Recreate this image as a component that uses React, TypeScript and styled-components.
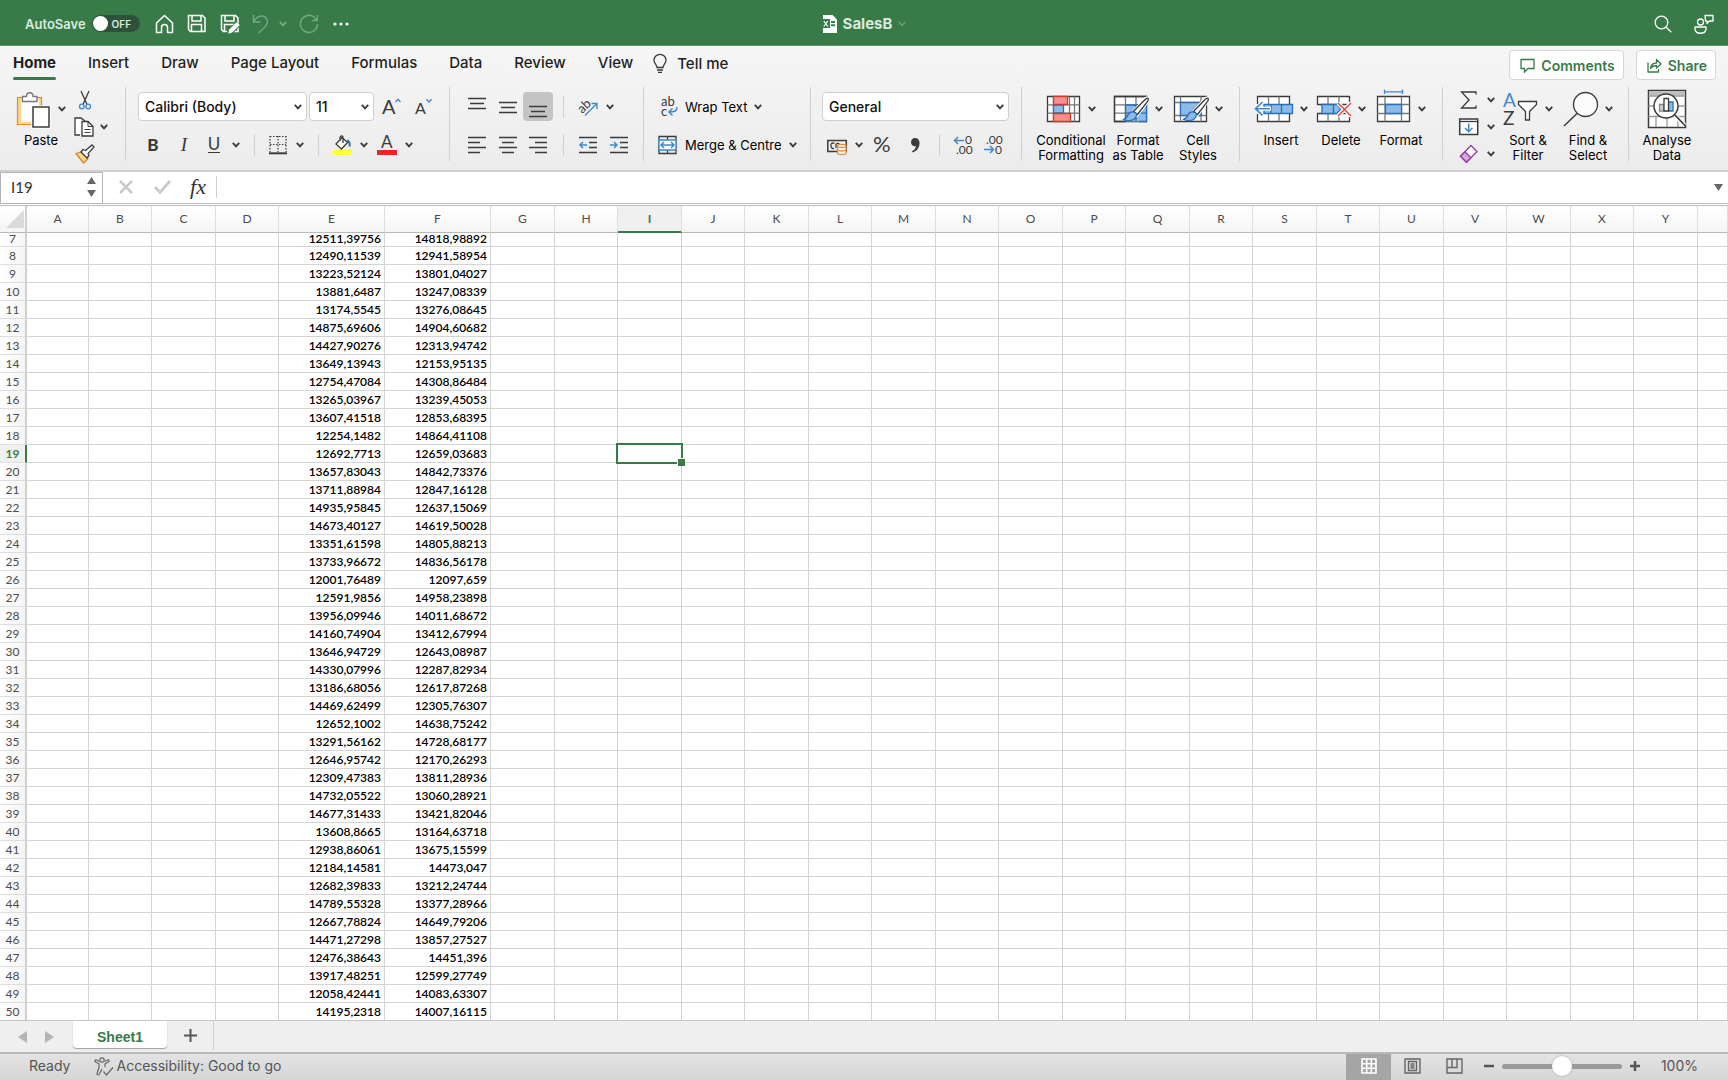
import React, { useState } from "react";
import styled, { createGlobalStyle, css } from "styled-components";

const INK = "#3b3b3b";
const BLUE = "#3d8ad0";
const GREEN = "#387b49";
const UI_FONT = 'Inter, "Liberation Sans", sans-serif';
const SHEET_FONT = 'Lato, "Liberation Sans", sans-serif';

const GlobalStyle = createGlobalStyle`
  * { box-sizing: border-box; }
  body { margin: 0; font-family: ${UI_FONT}; color: #1f1f1f; overflow: hidden; }
  button { font: inherit; color: inherit; background: none; border: 0; padding: 0; margin: 0; }
  svg { display: block; flex: none; overflow: visible; }
`;

/* ---------- data ---------- */

const rows: [number, string, string][] = [
  [7, "12511,39756", "14818,98892"],
  [8, "12490,11539", "12941,58954"],
  [9, "13223,52124", "13801,04027"],
  [10, "13881,6487", "13247,08339"],
  [11, "13174,5545", "13276,08645"],
  [12, "14875,69606", "14904,60682"],
  [13, "14427,90276", "12313,94742"],
  [14, "13649,13943", "12153,95135"],
  [15, "12754,47084", "14308,86484"],
  [16, "13265,03967", "13239,45053"],
  [17, "13607,41518", "12853,68395"],
  [18, "12254,1482", "14864,41108"],
  [19, "12692,7713", "12659,03683"],
  [20, "13657,83043", "14842,73376"],
  [21, "13711,88984", "12847,16128"],
  [22, "14935,95845", "12637,15069"],
  [23, "14673,40127", "14619,50028"],
  [24, "13351,61598", "14805,88213"],
  [25, "13733,96672", "14836,56178"],
  [26, "12001,76489", "12097,659"],
  [27, "12591,9856", "14958,23898"],
  [28, "13956,09946", "14011,68672"],
  [29, "14160,74904", "13412,67994"],
  [30, "13646,94729", "12643,08987"],
  [31, "14330,07996", "12287,82934"],
  [32, "13186,68056", "12617,87268"],
  [33, "14469,62499", "12305,76307"],
  [34, "12652,1002", "14638,75242"],
  [35, "13291,56162", "14728,68177"],
  [36, "12646,95742", "12170,26293"],
  [37, "12309,47383", "13811,28936"],
  [38, "14732,05522", "13060,28921"],
  [39, "14677,31433", "13421,82046"],
  [40, "13608,8665", "13164,63718"],
  [41, "12938,86061", "13675,15599"],
  [42, "12184,14581", "14473,047"],
  [43, "12682,39833", "13212,24744"],
  [44, "14789,55328", "13377,28966"],
  [45, "12667,78824", "14649,79206"],
  [46, "14471,27298", "13857,27527"],
  [47, "12476,38643", "14451,396"],
  [48, "13917,48251", "12599,27749"],
  [49, "12058,42441", "14083,63307"],
  [50, "14195,2318", "14007,16115"],
];

const letters = "ABCDEFGHIJKLMNOPQRSTUVWXY".split("");
const widthOf = (i: number) => {
  if (i === 0) return 62;
  if (i === 4 || i === 5) return 106;
  return i % 2 ? 63 : 64;
};

/* ---------- shared parts ---------- */

const Svg = ({ w, h, children }: { w: number; h: number; children: React.ReactNode }) => (
  <svg width={w} height={h} viewBox={`0 0 ${w} ${h}`} fill="none" stroke={INK} strokeWidth="1.3" aria-hidden="true">
    {children}
  </svg>
);

const Chevron = ({ color = INK, thin }: { color?: string; thin?: boolean }) => (
  <svg width="8" height="6" viewBox="0 0 8 6" fill="none" stroke={color} strokeWidth={thin ? 1.2 : 1.9} aria-hidden="true">
    <path d="M0.8 0.9 4 4.4 7.2 0.9" />
  </svg>
);

/* ---------- page frame ---------- */

const Window = styled.div`
  display: flex;
  flex-direction: column;
  height: 100vh;
  background: #fff;
`;

const TitleBar = styled.header`
  display: grid;
  grid-template-columns: 1fr auto 1fr;
  align-items: center;
  height: 46px;
  flex: none;
  padding: 2px 14px 0;
  background: ${GREEN};
  border-bottom: 1px solid #5d9469;
  color: #dbe9de;
`;

const QuickAccess = styled.div`
  display: flex;
  align-items: center;
  padding-left: 11px;
`;

const AutoSave = styled.button`
  display: flex;
  align-items: center;
  gap: 6px;
  margin-right: 13px;
  font-size: 13px;
  font-weight: 600;
`;

const Toggle = styled.span`
  display: flex;
  align-items: center;
  gap: 4px;
  width: 48px;
  height: 17px;
  padding: 1px;
  border-radius: 9px;
  background: #2e5239;
  font-size: 10px;
  &::before {
    content: "";
    width: 15px;
    height: 15px;
    border-radius: 50%;
    background: #fff;
  }
`;

const QuickButton = styled.button<{ $w?: number }>`
  display: flex;
  align-items: center;
  justify-content: center;
  width: ${(p) => p.$w ?? 33}px;
  height: 28px;
`;

const DocName = styled.button`
  display: flex;
  align-items: center;
  gap: 6px;
  font-size: 15px;
  font-weight: 700;
`;

const TitleActions = styled.div`
  display: flex;
  justify-content: flex-end;
  gap: 21px;
`;

/* ---------- ribbon ---------- */

const Ribbon = styled.section`
  flex: none;
  background: linear-gradient(#f6f6f6, #ececec);
  border-bottom: 2px solid #d0d0d0;
`;

const TabRow = styled.div`
  display: flex;
  justify-content: space-between;
  height: 38px;
  padding: 0 12px 0 13px;
`;

const Tabs = styled.nav`
  display: flex;
  align-items: flex-start;
  gap: 32px;
`;

const Tab = styled.button<{ $active?: boolean }>`
  height: 34px;
  padding-top: 3px;
  font-size: 15px;
  line-height: 28px;
  font-weight: ${(p) => (p.$active ? 700 : 500)};
  display: flex;
  flex-direction: column;
  ${(p) =>
    p.$active &&
    css`
      &::after {
        content: "";
        width: 100%;
        height: 3px;
        border-radius: 2px;
        background: ${GREEN};
      }
    `}
`;

const TellMe = styled.button`
  display: flex;
  align-items: center;
  gap: 10px;
  height: 34px;
  margin-left: -12px;
  font-size: 15px;
  font-weight: 500;
`;

const TabActions = styled.div`
  display: flex;
  gap: 12px;
  padding-top: 4px;
`;

const OutlineButton = styled.button`
  display: flex;
  align-items: center;
  gap: 6px;
  height: 30px;
  padding: 0 8px 0 10px;
  border: 1px solid #d6d6d6;
  border-radius: 4px;
  background: #fff;
  color: ${GREEN};
  font-size: 14px;
  font-weight: 600;
`;

const Groups = styled.div`
  display: flex;
  height: 86px;
`;

const Group = styled.div<{ $w?: number; $pad?: number; $last?: boolean }>`
  display: flex;
  flex: ${(p) => (p.$last ? "1" : "none")};
  width: ${(p) => (p.$w ? `${p.$w}px` : "auto")};
  padding-left: ${(p) => p.$pad ?? 12}px;
  background: ${(p) => (p.$last ? "none" : "linear-gradient(#d0d0d0, #d0d0d0) right 3px / 1px 74px no-repeat")};
`;

const Rows = styled.div`
  display: flex;
  flex-direction: column;
  gap: 8px;
  padding-top: 8px;
`;

const Line = styled.div`
  display: flex;
  align-items: flex-start;
  height: 30px;
`;

const Tool = styled.button<{ $w?: number; $on?: boolean }>`
  display: flex;
  align-items: center;
  justify-content: center;
  width: ${(p) => p.$w ?? 30}px;
  height: 29px;
  border-radius: 4px;
  background: ${(p) => (p.$on ? "#c4c4c4" : "none")};
`;

const Letter = styled.span<{ $kind?: "bold" | "italic" | "under" }>`
  font-family: ${SHEET_FONT};
  font-size: 17px;
  color: ${INK};
  ${(p) => p.$kind === "bold" && "font-weight: 900;"}
  ${(p) => p.$kind === "italic" && 'font: italic 19px "Liberation Serif", serif;'}
  ${(p) => p.$kind === "under" && "border-bottom: 1px solid #3b3b3b; line-height: 16px;"}
`;

const Rule = styled.span<{ $w?: number }>`
  align-self: center;
  width: ${(p) => p.$w ?? 20}px;
  height: 22px;
  background: linear-gradient(#d0d0d0, #d0d0d0) center / 1px 100% no-repeat;
`;

const SelectBox = styled.label<{ $w: number }>`
  display: grid;
  align-items: center;
  width: ${(p) => p.$w}px;
  margin-right: 2px;
  > * { grid-area: 1 / 1; }
  > svg { justify-self: end; margin-right: 5px; pointer-events: none; }
`;

const Select = styled.select`
  appearance: none;
  width: 100%;
  height: 29px;
  padding: 0 16px 0 6px;
  border: 1px solid #cfcfcf;
  border-radius: 4px;
  background: #fff;
  color: #111;
  font: 500 14px ${UI_FONT};
`;

const TextTool = styled.button`
  display: flex;
  align-items: center;
  gap: 7px;
  height: 30px;
  font-size: 13px;
  white-space: nowrap;
  color: #000;
`;

const BigTool = styled.button<{ $w?: number }>`
  display: flex;
  flex-direction: column;
  align-items: center;
  width: ${(p) => p.$w ?? 60}px;
  font-size: 13px;
  line-height: 15px;
  text-align: center;
  white-space: pre-line;
  color: #000;
`;

const BigIcon = styled.span`
  display: flex;
  align-items: center;
  gap: 6px;
  height: 49px;
`;

const SideTools = styled.div`
  display: flex;
  flex-direction: column;
  gap: 2px;
  padding-top: 3px;
`;

const SideTool = styled.button`
  display: grid;
  grid-template-columns: 22px 8px;
  gap: 7px;
  align-items: center;
  height: 25px;
`;

/* ---------- formula bar ---------- */

const FormulaBar = styled.div`
  display: flex;
  align-items: stretch;
  flex: none;
  height: 34px;
  border-bottom: 1px solid #bdbdbd;
  background: #fff;
`;

const NameBox = styled.div`
  display: flex;
  align-items: center;
  width: 103px;
  height: 32px;
  padding: 0 6px 2px 10px;
  border: 1px solid #b4b4b4;
`;

const NameInput = styled.input`
  flex: 1;
  min-width: 0;
  padding: 0;
  border: 0;
  background: none;
  color: #333;
  font: 15px ${SHEET_FONT};
`;

const FormulaRow = styled.div`
  display: flex;
  align-items: center;
  flex: 1;
  height: 32px;
  padding: 0 4px 1px 5px;
  border-bottom: 1px solid #bdbdbd;
`;

const FormulaInput = styled.input`
  flex: 1;
  border: 0;
  background: none;
  font: 14px ${UI_FONT};
`;

const Fx = styled.span`
  font: italic 22px/20px "Liberation Serif", serif;
  color: #333;
`;

/* ---------- sheet ---------- */

const SheetArea = styled.main`
  flex: 1;
  min-height: 0;
  overflow: hidden;
  background: #fff;
`;

const Sheet = styled.table`
  width: 100%;
  table-layout: fixed;
  border-collapse: separate;
  border-spacing: 0;
  font-family: ${SHEET_FONT};
  font-size: 12px;
  line-height: 17px;
`;

const ColHead = styled.th<{ $on?: boolean }>`
  height: 27px;
  padding: 0 0 1px;
  border-right: 1px solid #dedede;
  border-bottom: ${(p) => (p.$on ? `2px solid ${GREEN}` : "1px solid #b9b9b9")};
  background: ${(p) => (p.$on ? "#f0f0f0" : "linear-gradient(#ffffff, #f5f5f5)")};
  color: ${(p) => (p.$on ? GREEN : "#4c4c4c")};
  font-weight: ${(p) => (p.$on ? 700 : 400)};
`;

const Corner = styled(ColHead)`
  padding-left: 6px;
  border-right: 2px solid #cfcfcf;
`;

const RowHead = styled.th<{ $on?: boolean }>`
  padding: 0;
  border-right: 2px solid ${(p) => (p.$on ? GREEN : "#cfcfcf")};
  border-bottom: 1px solid #dedede;
  background: ${(p) => (p.$on ? "#f0f0f0" : "linear-gradient(90deg, #ffffff, #f5f5f5)")};
  color: ${(p) => (p.$on ? GREEN : "#4c4c4c")};
  font-weight: ${(p) => (p.$on ? 700 : 400)};
`;

const Cell = styled.td<{ $selected?: boolean }>`
  padding: 0 3px 0 0;
  border-right: 1px solid #d4d4d4;
  border-bottom: 1px solid #d4d4d4;
  color: #000;
  font-weight: 600;
  text-align: right;
  ${(p) => p.$selected && "position: relative; z-index: 1;"}
`;

const SheetRow = styled.tr<{ $cut?: boolean }>`
  height: ${(p) => (p.$cut ? 14 : 18)}px;
  line-height: ${(p) => (p.$cut ? 11 : 17)}px;
  vertical-align: ${(p) => (p.$cut ? "top" : "middle")};
  > * { vertical-align: inherit; }
`;

const Selection = styled.span`
  position: absolute;
  inset: -2px;
  border: 2px solid ${GREEN};
  &::after {
    content: "";
    position: absolute;
    right: -4px;
    bottom: -4px;
    width: 7px;
    height: 7px;
    border: 1px solid #fff;
    border-width: 1px 0 0 1px;
    background: ${GREEN};
  }
`;

/* ---------- footer ---------- */

const SheetTabs = styled.div`
  display: flex;
  align-items: flex-start;
  flex: none;
  height: 32px;
  border-top: 1px solid #c8c8c8;
  background: #efefef;
`;

const TabArrows = styled.div`
  display: flex;
  gap: 18px;
  width: 73px;
  padding: 10px 0 0 18px;
`;

const SheetTab = styled.button`
  height: 27px;
  width: 94px;
  border-radius: 0 0 4px 4px;
  background: #fff;
  box-shadow: 0 1px 1px #a0a0a0;
  color: ${GREEN};
  font: 700 14px "Liberation Sans", sans-serif;
  padding-top: 4px;
`;

const AddTab = styled.button`
  display: flex;
  align-items: center;
  justify-content: center;
  width: 47px;
  height: 29px;
  border-right: 1px solid #cfcfcf;
`;

const StatusBar = styled.footer`
  display: flex;
  align-items: center;
  flex: none;
  height: 28px;
  padding: 0 30px 0 29px;
  border-top: 2px solid #b8b8b8;
  background: linear-gradient(#e3e3e3, #d6d6d6);
  color: #555;
  font-size: 14px;
  line-height: 24px;
  > * { padding-bottom: 2px; }
`;

const Ready = styled.span``;

const Access = styled.button`
  display: flex;
  align-items: center;
  gap: 2px;
  margin-left: 24px;
`;

const Views = styled.div`
  display: flex;
  margin-left: auto;
  height: 100%;
  padding: 0;
`;

const ViewButton = styled.button<{ $on?: boolean }>`
  display: flex;
  align-items: center;
  justify-content: center;
  width: ${(p) => (p.$on ? 45 : 42)}px;
  padding-bottom: 2px;
  background: ${(p) => (p.$on ? "#a5a5a5" : "none")};
`;

const Zoom = styled.div`
  display: flex;
  align-items: center;
  gap: 8px;
  margin-left: 9px;
`;

const ZoomRange = styled.input`
  appearance: none;
  width: 120px;
  height: 20px;
  margin: 0;
  background: none;
  &::-webkit-slider-runnable-track {
    height: 5px;
    border-radius: 3px;
    background: #9a9a9a;
  }
  &::-webkit-slider-thumb {
    appearance: none;
    width: 20px;
    height: 20px;
    margin-top: -8px;
    border-radius: 50%;
    background: #fff;
    box-shadow: 0 0 2px #999;
  }
`;

const ZoomLabel = styled.span`
  width: 50px;
  text-align: right;
`;

/* ---------- icon drawings ---------- */

const Lines = ({ d }: { d: string }) => (
  <Svg w={18} h={20}>
    <path d={d} strokeWidth="1.5" />
  </Svg>
);

const Brush = () => (
  <>
    <path d="M34.5 9.5c1 .8.6 1.8-.2 3L24 26l-3.6-2.6L31.4 10.8c1.2-1.3 2.2-1.9 3.1-1.3z" fill="#fff" stroke="#fff" strokeWidth="3.5" />
    <path d="M34.9 9.3c.8.7.5 1.8-.3 3L24.5 25.5l-4-3L31.6 11c1.3-1.3 2.500-2.300 3.300-1.700z" fill="#fff" />
    <path d="M20.300 23c-2.700-.3-4.500 1-5.300 3-.8 2.200-2 3.600-4.500 4.300 3.500 2 8.500 1.700 11-.5 1.600-1.500 2.300-3.500 2-4.800-.4-1.200-1.700-1.900-3.200-2z" fill="#8dbbe8" stroke="#2a6fb8" />
  </>
);

const CondIcon = () => (
  <Svg w={36} h={40}>
    <path d="M1.500 7.500h32v25h-32z" fill="#fff" />
    <path d="M1.500 15.800h32M1.500 24.200h32M7.500 7.500v25M23.500 7.500v25M28.500 7.500v25" stroke="#777" />
    <path d="M7.500 16h10v8h-10z" fill="#8dbbe8" stroke="#2a6fb8" />
    <path d="M7.500 7.500h14v8h-14zM7.500 24.500h17v8h-17z" fill="#f2918f" stroke="#cf3b31" />
  </Svg>
);

const FormatTableIcon = () => (
  <Svg w={36} h={40}>
    <path d="M1.500 7.500h32v25h-32z" fill="#fff" />
    <path d="M12.500 16h21v16.500h-21z" fill="#8dbbe8" stroke="none" />
    <path d="M1.500 15.800h32M1.500 24.200h11M12.500 7.500v25M23 7.500v8" stroke="#777" />
    <path d="M12.500 32V16h21v16.500H26M12.500 24.200h21M23 16v16" stroke="#2a6fb8" />
    <path d="M12.500 32.500h-11v-25h32V16" />
    <Brush />
  </Svg>
);

const CellStylesIcon = () => (
  <Svg w={36} h={40}>
    <path d="M1.500 7.500h32v25h-32z" fill="#fff" />
    <path d="M1.500 13.500h32M1.500 26.500h32M7.500 7.500v25M28 7.500v25" stroke="#777" />
    <path d="M7.500 13.500H28v13H7.500z" fill="#8dbbe8" stroke="#2a6fb8" />
    <Brush />
  </Svg>
);

const InsertIcon = () => (
  <Svg w={40} h={40}>
    <path d="M3.500 15V7.500h32V15M3.500 25v7.500h32V25" fill="#fff" />
    <path d="M14.500 7.500V15M25 7.500V15M14.500 25v7.500M25 25v7.500" stroke="#777" />
    <path d="M10 15.500h28.500v9H10z" fill="#8dbbe8" stroke="#2a6fb8" />
    <path d="M17 15.500v9M27.500 15.500v9" stroke="#2a6fb8" />
    <path d="M2 19.700h15" stroke="#fff" strokeWidth="4" />
    <path d="M1.500 19.700H16M8.500 13l-7 6.700 7 6.700" stroke={BLUE} strokeWidth="1.600" />
  </Svg>
);

const DeleteIcon = () => (
  <Svg w={36} h={40}>
    <path d="M1.500 15.500v-8h32v8zM1.500 24.500v8h32v-8z" fill="#fff" />
    <path d="M12 7.500v8M23 7.500v8M12 24.500v8M23 24.500v8" stroke="#777" />
    <path d="M6 15.500h15l4 4.500-4 4.500H6z" fill="#8dbbe8" stroke="#2a6fb8" />
    <path d="M17.500 15.500v9" stroke="#2a6fb8" />
    <path d="M22 14l13 13M35 14L22 27" stroke="#fff" strokeWidth="4" />
    <path d="M22 14l13 13M35 14L22 27" stroke="#e0483e" strokeWidth="1.500" />
  </Svg>
);

const FormatIcon = () => (
  <Svg w={36} h={40}>
    <path d="M1.500 7.500h32v25h-32z" fill="#fff" />
    <path d="M1.500 15.500h32M1.500 24.500h32M9 7.500v25M25.500 7.500v25" stroke="#777" />
    <path d="M9.500 15.500h16v9h-16z" fill="#8dbbe8" stroke="#2a6fb8" />
    <path d="M8.500 2.800h18M8.500.5v4.600M26.500.5v4.600" stroke={BLUE} />
  </Svg>
);

const PasteIcon = () => (
  <Svg w={36} h={40}>
    <path d="M1.500 8.500h24v27h-24z" fill="#f8d98c" stroke="#e08a3c" strokeWidth="1.200" />
    <path d="M5 11h18v22H5z" fill="#fff" stroke="none" />
    <path d="M6.500 12.500v-5h4c0-5 6.500-5 6.500 0h4v5z" fill="#fff" stroke="#777" />
    <path d="M16.500 18h16.500v20h-16.500z" fill="#fff" stroke="#fff" strokeWidth="3" />
    <path d="M17 18h16v20H17z" fill="#fff" strokeWidth="1.500" />
  </Svg>
);

const SortIcon = () => (
  <Svg w={36} h={40}>
    <text x="0" y="18" fontSize="19" fontFamily="Lato" fill={BLUE} stroke="none">A</text>
    <text x="0" y="36" fontSize="19" fontFamily="Lato" fill={INK} stroke="none">Z</text>
    <path d="M15.500 12.500h18v3l-7 7v8.500h-4v-8.500l-7-7z" fill="#fff" />
  </Svg>
);

const FindIcon = () => (
  <Svg w={36} h={40}>
    <circle cx="22.500" cy="15.500" r="12" fill="#fcfcfc" />
    <path d="M14 24.500 1 37" strokeWidth="1.500" />
  </Svg>
);

const AnalyseIcon = () => (
  <Svg w={40} h={40}>
    <path d="M1.500 1.500h37v37h-37z" fill="#fff" strokeWidth="1.500" />
    <path d="M2.200 2.200h35.600v4.300H2.200z" fill="#bdbdbd" stroke="none" />
    <path d="M1.500 7h37M1.500 17h37M1.500 27.500h37M9 28v10M20 28v10M31 28v10" stroke="#999" />
    <circle cx="19" cy="17" r="12" fill="#fff" strokeWidth="1.500" />
    <path d="M12.500 15.500h4.500V22h-4.500z" fill="#ccc" stroke="#888" />
    <path d="M21.500 13h4.500v9h-4.500z" fill="#8dbbe8" stroke="#2a6fb8" />
    <path d="M17 9.500h4.500V22H17z" fill="#fff" />
    <path d="M28 26l10 10.500" stroke="#fff" strokeWidth="4" />
    <path d="M27.500 25.500l11 11.500" strokeWidth="1.800" />
  </Svg>
);

const SaveShape = () => <path d="M1.500 1.500h14l2.500 2.500v13.500H3.500l-2-2zM5 1.500v5.500h9V1.500M4.500 17.500v-7h10v7" />;

/* ---------- regions ---------- */

const Title = () => (
  <TitleBar>
    <QuickAccess>
      <AutoSave role="switch" aria-checked="false">
        AutoSave <Toggle>OFF</Toggle>
      </AutoSave>
      <QuickButton aria-label="Home" $w={24}>
        <svg width="19" height="20" viewBox="0 0 19 20" fill="none" stroke="#fff" strokeWidth="1.500">
          <path d="M1.500 9v9.500h5v-5c0-4 6-4 6 0v5h5V9l-8-7.500z" strokeLinejoin="round" />
        </svg>
      </QuickButton>
      <QuickButton aria-label="Save" $w={40}>
        <svg width="19" height="19" viewBox="0 0 19 19" fill="none" stroke="#fff" strokeWidth="1.500"><SaveShape /></svg>
      </QuickButton>
      <QuickButton aria-label="Save as" $w={26}>
        <svg width="20" height="20" viewBox="0 0 20 20" fill="none" stroke="#fff" strokeWidth="1.500">
          <SaveShape />
          <path d="M18.500 9.500 11 17l-2 3" stroke={GREEN} strokeWidth="6" />
          <path d="M16.800 8.500l2.500 2.500-7 7-3.500 1.200 1-3.700z" fill="#fff" stroke="#fff" strokeWidth="1" />
        </svg>
      </QuickButton>
      <QuickButton aria-label="Undo" $w={36}>
        <svg width="17" height="20" viewBox="0 0 17 20" fill="none" stroke="#76a682" strokeWidth="1.400">
          <path d="M1.500 1v7h7M1.500 8C5 1.500 11 .5 14 4c3 4 1 7-1.500 9.500L6.500 19" />
        </svg>
      </QuickButton>
      <QuickButton aria-label="Undo history" $w={9}><Chevron color="#76a682" /></QuickButton>
      <QuickButton aria-label="Redo" $w={42}>
        <svg width="20" height="20" viewBox="0 0 20 20" fill="none" stroke="#76a682" strokeWidth="1.400">
          <path d="M18.500 10A8.600 8.600 0 1 1 15.500 3.400l2.500 2.500M18.300 1v5.500h-5.500" />
        </svg>
      </QuickButton>
      <QuickButton aria-label="More" $w={22}>
        <svg width="16" height="4" viewBox="0 0 16 4" fill="#fff"><circle cx="2" cy="2" r="1.600" /><circle cx="8" cy="2" r="1.600" /><circle cx="14" cy="2" r="1.600" /></svg>
      </QuickButton>
    </QuickAccess>
    <DocName>
      <svg width="15" height="18" viewBox="0 0 15 18">
        <path d="M1 0h9.500L15 4.500V18H1z" fill="#fff" />
        <path d="M0 4h8v9H0z" fill={GREEN} />
        <path d="M9 6h4v2H9zM9 9.200h4v2H9z" fill={GREEN} />
        <path d="M1.800 6l4 5.500M5.800 6l-4 5.500" stroke="#fff" strokeWidth="1.200" />
      </svg>
      SalesB
      <Chevron color="#76a682" thin />
    </DocName>
    <TitleActions>
      <QuickButton aria-label="Search" $w={20}>
        <svg width="18" height="18" viewBox="0 0 18 18" fill="none" stroke="#fff" strokeWidth="1.300"><circle cx="7.500" cy="7.500" r="6.300" /><path d="M12 12l5.300 5.300" /></svg>
      </QuickButton>
      <QuickButton aria-label="Collaboration" $w={20}>
        <svg width="20" height="20" viewBox="0 0 20 20" fill="none" stroke="#fff" strokeWidth="1.300">
          <circle cx="6.500" cy="8" r="3" /><path d="M1 13h11v2.500c-1 5-10 5-11 0z" strokeLinejoin="round" /><path d="M11 1.500h8V7h-3.500L13 9.500V7h-1.500z" strokeLinejoin="round" />
        </svg>
      </QuickButton>
    </TitleActions>
  </TitleBar>
);

const tabNames = ["Home", "Insert", "Draw", "Page Layout", "Formulas", "Data", "Review", "View"];

const Big = ({ icon, label, w, plain }: { icon: React.ReactNode; label: string; w?: number; plain?: boolean }) => (
  <BigTool $w={w}>
    <BigIcon>{icon}{!plain && <Chevron />}</BigIcon>
    {label}
  </BigTool>
);

const RibbonBar = () => (
  <Ribbon>
    <TabRow>
      <Tabs aria-label="Ribbon">
        {tabNames.map((t) => <Tab key={t} $active={t === "Home"}>{t}</Tab>)}
        <TellMe>
          <Svg w={14} h={19}>
            <path d="M4 13.500C4 10.500 1 9.500 1 6.300a6 6 0 0 1 12 0c0 3.200-3 4.200-3 7.200zM4 16h6M5 18.300h4" />
          </Svg>
          Tell me
        </TellMe>
      </Tabs>
      <TabActions>
        <OutlineButton>
          <svg width="15" height="15" viewBox="0 0 15 15" fill="none" stroke={GREEN} strokeWidth="1.300"><path d="M1 1.500h13v9H8l-3.500 3.500v-3.500H1z" /></svg>
          Comments
        </OutlineButton>
        <OutlineButton>
          <svg width="15" height="15" viewBox="0 0 15 15" fill="none" stroke={GREEN} strokeWidth="1.300"><path d="M1 4.500V14h10.500v-3M3.500 10.500c.5-4 3-5.500 6-5.500V1.500L14 6l-4.500 4V7.500c-2.500 0-4.500.8-6 3z" strokeLinejoin="round" /></svg>
          Share
        </OutlineButton>
      </TabActions>
    </TabRow>
    <Groups>
      <Group $w={126} $pad={11}>
        <Big icon={<PasteIcon />} label="Paste" w={60} />
        <SideTools>
          <SideTool aria-label="Cut">
            <Svg w={22} h={20}>
              <path d="M10 1l6 13.500M18 1l-6 13.500" />
              <circle cx="10.800" cy="16.500" r="2.300" stroke={BLUE} /><circle cx="17.200" cy="16.500" r="2.300" stroke={BLUE} />
            </Svg>
          </SideTool>
          <SideTool aria-label="Copy">
            <Svg w={22} h={20}>
              <path d="M9 18H4V1h6l4 3" fill="#fff" />
              <path d="M11 4.500h6l5 5v9.500h-11z" fill="#fff" /><path d="M17 4.500v5h5M13.500 12.500h6M13.500 15.500h6" strokeWidth="1" />
            </Svg>
            <Chevron />
          </SideTool>
          <SideTool aria-label="Format painter">
            <Svg w={22} h={20}>
              <path d="M5 9.500l5-1.500 7 6.500-4.500 4.500z" fill="#f8d98c" stroke="#e07f2c" />
              <path d="M10 8l2-2.500 2.500 1L21 1l2 2-6 6.500 1 2-2 2.500z" fill="#fff" />
            </Svg>
          </SideTool>
        </SideTools>
      </Group>

      <Group $w={324}>
        <Rows>
          <Line>
            <SelectBox $w={169}><Select aria-label="Font"><option>Calibri (Body)</option></Select><Chevron /></SelectBox>
            <SelectBox $w={65}><Select aria-label="Font size"><option>11</option></Select><Chevron /></SelectBox>
            <Tool aria-label="Increase font size" $w={32}>
              <Svg w={20} h={20}><text x="0" y="17" fontSize="20" fontFamily="Lato" fill={INK} stroke="none">A</text><path d="M13.500 5l2.500-2.800L18.500 5" stroke={BLUE} /></Svg>
            </Tool>
            <Tool aria-label="Decrease font size" $w={32}>
              <Svg w={18} h={20}><text x="0" y="17" fontSize="16" fontFamily="Lato" fill={INK} stroke="none">A</text><path d="M11.500 2.200L14 5l2.500-2.800" stroke={BLUE} /></Svg>
            </Tool>
          </Line>
          <Line>
            <Tool aria-label="Bold"><Letter $kind="bold">B</Letter></Tool>
            <Tool aria-label="Italic" $w={32}><Letter $kind="italic">I</Letter></Tool>
            <Tool aria-label="Underline" $w={28}><Letter $kind="under">U</Letter></Tool>
            <Tool aria-label="Underline options" $w={16}><Chevron /></Tool>
            <Rule />
            <Tool aria-label="Borders" $w={28}>
              <Svg w={18} h={20}><path d="M1 1.500h16M1 9.500h16M1 1v16M9 1v16M17 1v16" strokeDasharray="1.500 1.500" strokeWidth="1.200" /><path d="M0 18.300h18" strokeWidth="2" /></Svg>
            </Tool>
            <Tool aria-label="Border options" $w={16}><Chevron /></Tool>
            <Rule />
            <Tool aria-label="Fill colour" $w={28}>
              <Svg w={20} h={20}>
                <path d="M10 2.500 4 9l5.500 5 6-6.500zM8 6V2.500c0-2 3-2 3 0V8" fill="#fff" /><path d="M15 5.500c2.500.5 3 2.500 2.500 6" stroke="#2a6fb8" strokeWidth="2" />
                <path d="M0 17.500h20" stroke="#ffff4d" strokeWidth="5" />
              </Svg>
            </Tool>
            <Tool aria-label="Fill options" $w={16}><Chevron /></Tool>
            <Tool aria-label="Font colour">
              <Svg w={20} h={20}><text x="4" y="13" fontSize="17" fontFamily="Lato" fill={INK} stroke="none">A</text><path d="M0 17.500h20" stroke="#e8291c" strokeWidth="5" /></Svg>
            </Tool>
            <Tool aria-label="Font colour options" $w={14}><Chevron /></Tool>
          </Line>
        </Rows>
      </Group>

      <Group $w={194} $pad={11}>
        <Rows>
          <Line>
            <Tool aria-label="Align top" $w={31}><Lines d="M0 1.500h18M2 6.500h14M0 11.500h18" /></Tool>
            <Tool aria-label="Align middle" $w={31}><Lines d="M0 5.500h18M2 10.500h14M0 15.500h18" /></Tool>
            <Tool aria-label="Align bottom" $w={30} $on><Lines d="M0 9.500h18M2 14.500h14M0 19.500h18" /></Tool>
            <Rule />
            <Tool aria-label="Orientation">
              <Svg w={20} h={20}>
                <text x="1" y="15" fontSize="13" fontFamily="Lato" fill={INK} stroke="none" transform="rotate(-45 5 12)">ab</text>
                <path d="M7 18.500 19 6.500M13.500 6.500H19V12" stroke={BLUE} />
              </Svg>
            </Tool>
            <Tool aria-label="Orientation options" $w={14}><Chevron /></Tool>
          </Line>
          <Line>
            <Tool aria-label="Align left" $w={31}><Lines d="M0 2.500h18M0 7.500h12M0 12.500h18M0 17.500h12" /></Tool>
            <Tool aria-label="Centre" $w={31}><Lines d="M0 2.500h18M3 7.500h12M0 12.500h18M3 17.500h12" /></Tool>
            <Tool aria-label="Align right" $w={30}><Lines d="M0 2.500h18M6 7.500h12M0 12.500h18M6 17.500h12" /></Tool>
            <Rule />
            <Tool aria-label="Decrease indent">
              <Svg w={18} h={20}><path d="M0 2.500h18M10 7.500h8M10 12.500h8M0 17.500h18" strokeWidth="1.500" /><path d="M8 10H1M4 7l-3 3 3 3" stroke={BLUE} strokeWidth="1.500" /></Svg>
            </Tool>
            <Tool aria-label="Increase indent" $w={32}>
              <Svg w={18} h={20}><path d="M0 2.500h18M10 7.500h8M10 12.500h8M0 17.500h18" strokeWidth="1.500" /><path d="M0 10h7M4 7l3 3-3 3" stroke={BLUE} strokeWidth="1.500" /></Svg>
            </Tool>
          </Line>
        </Rows>
      </Group>

      <Group $w={167} $pad={14}>
        <Rows>
          <Line>
            <TextTool>
              <Svg w={20} h={20}>
                <text x="3" y="9" fontSize="13" fontFamily="Lato" fill={INK} stroke="none">ab</text>
                <text x="3" y="19" fontSize="13" fontFamily="Lato" fill={INK} stroke="none">c</text>
                <path d="M19 10c0 4-2 5-8 5M14.500 11.500 11 15l3.500 3.500" stroke={BLUE} strokeWidth="1.500" />
              </Svg>
              Wrap Text <Chevron />
            </TextTool>
          </Line>
          <Line>
            <TextTool>
              <Svg w={20} h={20}>
                <path d="M1 1.500h17v17H1zM9.500 1v4M9.500 15v4" /><path d="M1 5h17v10H1z" fill="#fff" stroke={BLUE} /><path d="M3 10h13M6 7l-3 3 3 3M13 7l3 3-3 3" stroke={BLUE} strokeWidth="1.500" />
              </Svg>
              Merge &amp; Centre <Chevron />
            </TextTool>
          </Line>
        </Rows>
      </Group>

      <Group $w={211} $pad={11}>
        <Rows>
          <Line>
            <SelectBox $w={187}><Select aria-label="Number format"><option>General</option></Select><Chevron /></SelectBox>
          </Line>
          <Line>
            <Tool aria-label="Currency">
              <Svg w={20} h={20}>
                <path d="M.8 5.500h18.500v11H.8z" strokeWidth="1.500" /><path d="M7.500 8.300c-3-1-4 1-3.500 3s1 2.500 3 2.300M9 13V9.500c1-1.500 2.500-1.500 3.500 0" />
                <path d="M10.500 11c0-2.200 8.500-2.200 8.500 0v7c0 2-8.500 2-8.500 0z" fill="#fff" stroke="#e8893a" /><path d="M10.500 11c0 2 8.500 2 8.500 0M10.500 14.500c0 2 8.500 2 8.500 0" stroke="#e8893a" />
              </Svg>
            </Tool>
            <Tool aria-label="Currency options" $w={14}><Chevron /></Tool>
            <Tool aria-label="Percent" $w={34}>
              <Svg w={20} h={22}><text x="0" y="18" fontSize="22" fontFamily="Lato" fill={INK} stroke="none">%</text></Svg>
            </Tool>
            <Tool aria-label="Comma style">
              <Svg w={12} h={18}><path d="M6 2a4.200 4.200 0 0 0-1 8.200c.8.200 1.500 0 2-.2-.3 2.500-1.800 4.200-4 5.200l.6 1.300C8 15 10.800 11.500 10.500 6.300 10.200 3.500 8.500 2 6 2z" fill={INK} stroke="none" /></Svg>
            </Tool>
            <Rule $w={18} />
            <Tool aria-label="Increase decimals">
              <Svg w={20} h={20}>
                <text x="12" y="9" fontSize="12" fontFamily="Lato" fill={INK} stroke="none">0</text>
                <text x="3" y="19" fontSize="12" fontFamily="Lato" fill={INK} stroke="none">.00</text>
                <path d="M11 5.500H1.500M5 2 1.500 5.500 5 9" stroke={BLUE} strokeWidth="1.500" />
              </Svg>
            </Tool>
            <Tool aria-label="Decrease decimals">
              <Svg w={20} h={20}>
                <text x="3" y="9" fontSize="12" fontFamily="Lato" fill={INK} stroke="none">.00</text>
                <text x="12" y="19" fontSize="12" fontFamily="Lato" fill={INK} stroke="none">0</text>
                <path d="M1 14.500h9.500M7 11l3.500 3.500L7 18" stroke={BLUE} strokeWidth="1.500" />
              </Svg>
            </Tool>
          </Line>
        </Rows>
      </Group>

      <Group $w={218}>
        <Big icon={<CondIcon />} label={"Conditional\nFormatting"} w={74} />
        <Big icon={<FormatTableIcon />} label={"Format\nas Table"} />
        <Big icon={<CellStylesIcon />} label={"Cell\nStyles"} />
      </Group>

      <Group $w={203} $pad={11}>
        <Big icon={<InsertIcon />} label="Insert" />
        <Big icon={<DeleteIcon />} label="Delete" />
        <Big icon={<FormatIcon />} label="Format" />
      </Group>

      <Group $w={186} $pad={15}>
        <SideTools>
          <SideTool aria-label="AutoSum">
            <Svg w={22} h={20}><path d="M18 4.500V2H3.500l7.500 8-7.500 8H18v-2.500" /></Svg><Chevron />
          </SideTool>
          <SideTool aria-label="Fill">
            <Svg w={22} h={20}><path d="M1.700 2h18v15.500h-18z" fill="#fff" strokeWidth="1.500" /><path d="M1.700 4.500h18" /><path d="M10.700 6.500v8M7 11l3.700 3.700 3.700-3.700" stroke={BLUE} strokeWidth="1.500" /></Svg><Chevron />
          </SideTool>
          <SideTool aria-label="Clear">
            <Svg w={22} h={20}><path d="M13 1.500l6 6L8.500 18.300l-6-6z" fill="#fff" stroke="#8e3fa3" /><path d="M7 7.800l6 6-4.500 4.500-6-6z" fill="#d8a6df" stroke="#8e3fa3" /></Svg><Chevron />
          </SideTool>
        </SideTools>
        <Big icon={<SortIcon />} label={"Sort &\nFilter"} w={66} />
        <Big icon={<FindIcon />} label={"Find &\nSelect"} w={54} />
      </Group>

      <Group $last>
        <Big icon={<AnalyseIcon />} label={"Analyse\nData"} w={52} plain />
      </Group>
    </Groups>
  </Ribbon>
);

const Formula = () => (
  <FormulaBar>
    <NameBox>
      <NameInput aria-label="Name box" defaultValue="I19" />
      <svg width="9" height="20" viewBox="0 0 9 20" fill="#666"><path d="M4.500 0 9 7H0zM4.500 20 0 13h9z" /></svg>
    </NameBox>
    <FormulaRow>
      <Tool aria-label="Cancel" $w={36}><svg width="14" height="14" viewBox="0 0 14 14" stroke="#c9c9c9" strokeWidth="2.500"><path d="M1 1l12 12M13 1 1 13" /></svg></Tool>
      <Tool aria-label="Enter" $w={36}><svg width="17" height="14" viewBox="0 0 17 14" fill="none" stroke="#c9c9c9" strokeWidth="2.800"><path d="M1 7l5 5.500L16 1" /></svg></Tool>
      <Tool aria-label="Insert function" $w={36}><Fx>fx</Fx></Tool>
      <Rule $w={1} />
      <FormulaInput aria-label="Formula" />
      <QuickButton aria-label="Expand formula bar" $w={12}><svg width="9" height="7" viewBox="0 0 9 7" fill="#666"><path d="M4.500 7 0 0h9z" /></svg></QuickButton>
    </FormulaRow>
  </FormulaBar>
);

const Grid = () => (
  <SheetArea>
    <Sheet>
      <colgroup>
        <col width={27} />
        {letters.map((l, i) => <col key={l} width={widthOf(i)} />)}
        <col />
      </colgroup>
      <thead>
        <tr>
          <Corner aria-label="Select all"><svg width="18" height="18" viewBox="0 0 18 18"><path d="M18 0v18H0z" fill="#dadada" /></svg></Corner>
          {letters.map((l) => <ColHead key={l} $on={l === "I"}>{l}</ColHead>)}
          <ColHead />
        </tr>
      </thead>
      <tbody>
        {rows.map(([n, e, f], r) => (
          <SheetRow key={n} $cut={r === 0}>
            <RowHead $on={n === 19}>{n}</RowHead>
            {letters.map((l) => {
              const selected = l === "I" && n === 19;
              return (
                <Cell key={l} $selected={selected}>
                  {l === "E" ? e : l === "F" ? f : null}
                  {selected && <Selection />}
                </Cell>
              );
            })}
            <Cell />
          </SheetRow>
        ))}
      </tbody>
    </Sheet>
  </SheetArea>
);

const Footer = () => {
  const [zoom, setZoom] = useState(100);
  return (
    <>
      <SheetTabs>
        <TabArrows>
          <button aria-label="Previous sheet"><svg width="9" height="12" viewBox="0 0 9 12" fill="#b5b5b5"><path d="M0 6l9-6v12z" /></svg></button>
          <button aria-label="Next sheet"><svg width="9" height="12" viewBox="0 0 9 12" fill="#b5b5b5"><path d="M9 6 0 0v12z" /></svg></button>
        </TabArrows>
        <SheetTab>Sheet1</SheetTab>
        <AddTab aria-label="Add sheet"><svg width="13" height="13" viewBox="0 0 13 13" stroke="#555" strokeWidth="2"><path d="M6.500 0v13M0 6.500h13" /></svg></AddTab>
      </SheetTabs>
      <StatusBar>
        <Ready>Ready</Ready>
        <Access>
          <svg width="20" height="19" viewBox="0 0 20 19" fill="none" stroke="#666" strokeWidth="1.200" strokeLinejoin="round">
            <circle cx="8" cy="3" r="2.200" />
            <path d="M5.500 4.500 2.500 3C.8 2.700.5 4.500 1.500 5l3.500 1.800v3.700L3 16.500c-.2 1.500 1.500 2 2.200.8L8 12M10.500 4.500l3-1.500c1.700-.3 2 1.500 1 2L11 6.800v3.500" />
            <path d="M9.500 14.500l3 3.500 6.500-7.500" />
          </svg>
          Accessibility: Good to go
        </Access>
        <Views>
          <ViewButton $on aria-label="Normal view"><svg width="16" height="16" viewBox="0 0 16 16" fill="none" stroke="#fff" strokeWidth="1.600"><path d="M1 1h14v14H1zM5.700 1v14M10.300 1v14M1 5.700h14M1 10.300h14" /></svg></ViewButton>
          <ViewButton aria-label="Page layout view"><svg width="17" height="16" viewBox="0 0 17 16" fill="none" stroke="#666" strokeWidth="1.400"><path d="M1 1h15v14H1zM4.500 3.500h8v9h-8zM6.500 6h4M6.500 8h4M6.500 10h4" /></svg></ViewButton>
          <ViewButton aria-label="Page break view"><svg width="17" height="16" viewBox="0 0 17 16" fill="none" stroke="#666" strokeWidth="1.400"><path d="M1 1h15v14H1zM1 9.500h10V1M6 1v8.500" /></svg></ViewButton>
        </Views>
        <Zoom>
          <button aria-label="Zoom out"><svg width="10" height="10" viewBox="0 0 10 10" stroke="#555" strokeWidth="2.500"><path d="M0 5h10" /></svg></button>
          <ZoomRange type="range" aria-label="Zoom" min={0} max={200} value={zoom} onChange={(e) => setZoom(Number(e.target.value))} />
          <button aria-label="Zoom in"><svg width="10" height="10" viewBox="0 0 10 10" stroke="#555" strokeWidth="2.500"><path d="M0 5h10M5 0v10" /></svg></button>
          <ZoomLabel>{zoom}%</ZoomLabel>
        </Zoom>
      </StatusBar>
    </>
  );
};

export default function App() {
  return (
    <Window>
      <GlobalStyle />
      <Title />
      <RibbonBar />
      <Formula />
      <Grid />
      <Footer />
    </Window>
  );
}
